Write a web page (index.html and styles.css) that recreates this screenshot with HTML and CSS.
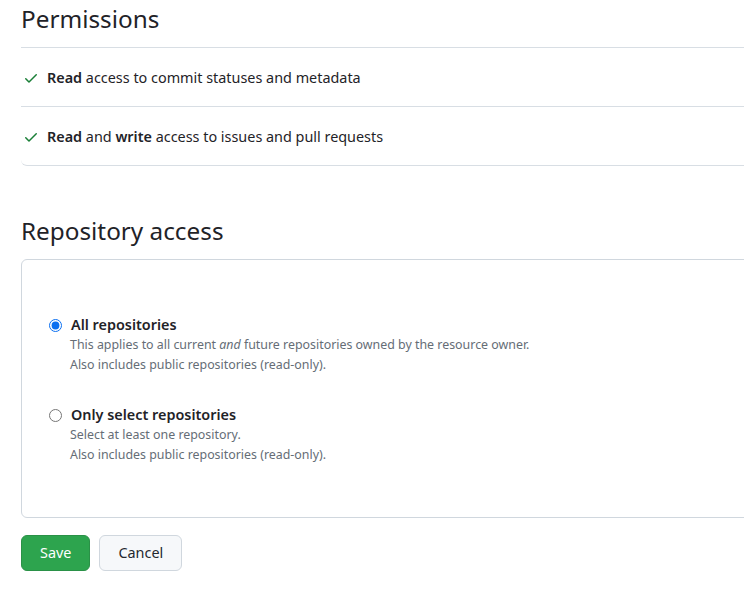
FILE: index.html
```html
<!DOCTYPE html>
<html lang="en">
<head>
    <meta charset="UTF-8">
    <meta name="viewport" content="width=device-width, initial-scale=1.0">
    <title>Permissions</title>
    <link rel="stylesheet" href="styles.css">
</head>
<body>
    <main class="page">
      <div class="subhead">
        <h2 class="subhead-heading">Permissions</h2>
      </div>

      <ul class="permission-list">
        <li class="permission-item">
          <svg class="permission-icon" width="16" height="16" viewBox="0 0 16 16" aria-hidden="true"><path d="M13.78 4.22a.75.75 0 0 1 0 1.06l-7.25 7.25a.75.75 0 0 1-1.06 0L2.22 9.28a.75.75 0 0 1 1.06-1.06L6 10.94l6.72-6.72a.75.75 0 0 1 1.06 0Z"/></svg>
          <span><strong>Read</strong> access to commit statuses and metadata</span>
        </li>
        <li class="permission-item">
          <svg class="permission-icon" width="16" height="16" viewBox="0 0 16 16" aria-hidden="true"><path d="M13.78 4.22a.75.75 0 0 1 0 1.06l-7.25 7.25a.75.75 0 0 1-1.06 0L2.22 9.28a.75.75 0 0 1 1.06-1.06L6 10.94l6.72-6.72a.75.75 0 0 1 1.06 0Z"/></svg>
          <span><strong>Read</strong> and <strong>write</strong> access to issues and pull requests</span>
        </li>
      </ul>

      <div class="subhead subhead-plain">
        <h2 class="subhead-heading">Repository access</h2>
      </div>

      <form class="access-form" action="#" method="post">
        <div class="access-box">
          <label class="radio-option">
            <input class="radio-input" type="radio" name="access" value="all" checked>
            <span class="radio-body">
              <span class="radio-title">All repositories</span>
              <span class="radio-note">This applies to all current <em>and</em> future repositories owned by the resource owner.</span>
              <span class="radio-note">Also includes public repositories (read-only).</span>
            </span>
          </label>

          <label class="radio-option">
            <input class="radio-input" type="radio" name="access" value="selected">
            <span class="radio-body">
              <span class="radio-title">Only select repositories</span>
              <span class="radio-note">Select at least one repository.</span>
              <span class="radio-note">Also includes public repositories (read-only).</span>
            </span>
          </label>
        </div>

        <div class="form-actions">
          <button class="btn btn-primary" type="submit">Save</button>
          <button class="btn" type="button">Cancel</button>
        </div>
      </form>
    </main>
</body>
</html>
```

FILE: styles.css
```css
html,
body {
  height: 100%;
}

body {
  margin: 0;
  padding: 0;
  overflow: hidden;
  font-family: "Noto Sans", sans-serif;
  font-size: 14.4px;
  line-height: 20px;
  color: #1f2328;
  background-color: #ffffff;
}

.page {
  width: 800px;
  padding-left: 21px;
}

.subhead {
  padding-bottom: 10px;
  border-bottom: 1px solid #d8dee4;
}

.subhead-plain {
  margin-top: 46px;
  padding-bottom: 10px;
  border-bottom: none;
}

.subhead-heading {
  margin: 0;
  font-size: 24.3px;
  font-weight: 400;
  line-height: 37px;
}

.permission-list {
  margin: 0;
  padding: 0;
  list-style: none;
  border-bottom: 1px solid #d8dee4;
  border-bottom-left-radius: 6px;
}

.permission-item {
  display: flex;
  align-items: center;
  padding: 20px 0 18px 2px;
}

.permission-item + .permission-item {
  border-top: 1px solid #d8dee4;
}

.permission-icon {
  flex-shrink: 0;
  margin-right: 8px;
  fill: #1a7f37;
}

.permission-item strong {
  font-weight: 600;
}

.access-box {
  display: flex;
  flex-direction: column;
  gap: 30px;
  padding: 55px 26px 52px;
  border: 1px solid #d0d7de;
  border-radius: 6px;
}

.radio-option {
  display: flex;
  align-items: flex-start;
}

.radio-input {
  flex-shrink: 0;
  width: 13px;
  height: 13px;
  margin: 4px 9px 0 1px;
  accent-color: #0b6ff0;
}

.radio-body {
  display: flex;
  flex-direction: column;
}

.radio-title {
  font-weight: 600;
}

.radio-note {
  margin-left: -1px;
  font-size: 12.4px;
  color: #656d76;
}

.form-actions {
  display: flex;
  gap: 9px;
  margin-top: 17px;
}

.btn {
  padding: 0 18px;
  height: 36px;
  font: inherit;
  color: #24292f;
  background-color: #f6f8fa;
  border: 1px solid #d0d7de;
  border-radius: 6px;
  cursor: pointer;
}

.btn-primary {
  color: #ffffff;
  background-color: #2da44e;
  border-color: #2a9147;
}
```
